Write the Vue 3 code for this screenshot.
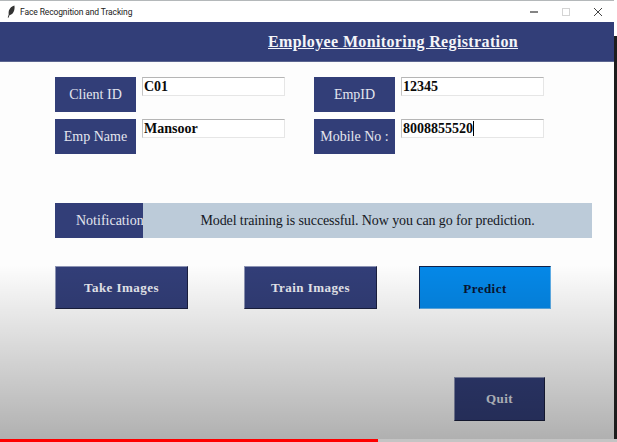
<script setup>
const fields = [
  { label: 'Client ID', value: 'C01' },
  { label: 'EmpID', value: '12345' },
  { label: 'Emp Name', value: 'Mansoor' },
  { label: 'Mobile No :', value: '8008855520', caret: true },
]
</script>

<template>
  <div class="screen">
    <div class="window">
      <div class="titlebar">
        <svg class="feather" width="8" height="13" viewBox="0 0 8 13">
          <path d="M7.400 .4C5 1 2.600 3 1.900 5.600 1.500 7.200 1.600 8.600 1.700 9.600L.7 12.600l.8.2 1-2.600C5 9.700 6.700 7.600 7.300 5 7.700 3.400 7.700 1.800 7.400 .4Z" fill="#333"/>
        </svg>
        <span class="title-text">Face Recognition and Tracking</span>
        <div class="controls">
          <svg width="10" height="10" viewBox="0 0 10 10"><path d="M1 5h8" stroke="#333" stroke-width="1.2"/></svg>
          <svg width="10" height="10" viewBox="0 0 10 10"><rect x="1.500" y="1.500" width="7" height="7" fill="none" stroke="#d4d4d4"/></svg>
          <svg width="10" height="10" viewBox="0 0 10 10"><path d="M1 1l8 8M9 1l-8 8" stroke="#444" stroke-width="1"/></svg>
        </div>
      </div>

      <header class="banner"><h1>Employee Monitoring Registration</h1></header>

      <main class="content">
        <section class="form">
          <div v-for="f in fields" :key="f.label" class="field">
            <div class="label">{{ f.label }}</div>
            <div class="entry"><span :class="{ caret: f.caret }">{{ f.value }}</span></div>
          </div>
        </section>

        <section class="notice">
          <div class="notice-label">Notification</div>
          <div class="notice-msg">Model training is successful. Now you can go for prediction.</div>
        </section>

        <section class="actions">
          <button class="btn take">Take Images</button>
          <button class="btn train">Train Images</button>
          <button class="btn predict">Predict</button>
        </section>

        <div class="quit-row"><button class="btn quit">Quit</button></div>
      </main>
    </div>
    <div class="shade"></div>
    <div class="edge"></div>
    <div class="progress"><div class="played"></div></div>
  </div>
</template>

<style>
html, body { margin: 0; background: #fff; }
</style>

<style scoped>
.screen {
  position: relative;
  width: 617px;
  height: 442px;
  overflow: hidden;
  background: #fff;
  font-family: "Liberation Serif", "Times New Roman", serif;
}
.window {
  width: 614px;
  height: 442px;
  background: #fdfdfd;
  box-sizing: border-box;
  border-top: 1px solid #b4b8ba;
}
.titlebar {
  height: 21px;
  display: flex;
  align-items: center;
  background: #fff;
  padding-left: 7px;
  box-sizing: border-box;
}
.feather { margin-right: 5px; }
.title-text {
  font-family: Roboto, "Liberation Sans", sans-serif;
  font-size: 8.5px;
  letter-spacing: -.12px;
  color: #222;
}
.controls {
  margin-left: auto;
  display: flex;
  gap: 22px;
  padding-right: 11px;
  align-items: center;
}
.banner {
  height: 40px;
  background: #323e78;
  display: flex;
  align-items: center;
  padding-left: 268px;
  box-sizing: border-box;
  border-bottom: 1px solid #5b6590;
}
.banner h1 {
  margin: 0;
  font-size: 16px;
  font-weight: 700;
  color: #f4f5f8;
  text-decoration: underline;
  letter-spacing: .37px;
}
.content { padding: 15px 0 0 55px; }
.form {
  display: grid;
  grid-template-columns: 230px 230px;
  column-gap: 29px;
  row-gap: 7px;
}
.field { display: flex; gap: 6px; align-items: flex-start; }
.label {
  width: 81px;
  height: 35px;
  background: #323e78;
  color: #e4e6ef;
  font-size: 14px;
  display: flex;
  align-items: center;
  justify-content: center;
}
.entry {
  width: 143px;
  height: 19px;
  box-sizing: border-box;
  background: #fff;
  border: 1px solid #e6e6e6;
  border-top-color: #b5b5b5;
  border-left-color: #c4c4c4;
  padding-left: 1px;
  font-size: 14px;
  font-weight: 700;
  line-height: 18px;
  color: #0a0a0a;
}
.caret { border-right: 1px solid #000; }
.notice {
  display: flex;
  height: 35px;
  width: 537px;
  margin-top: 49px;
  font-size: 14px;
}
.notice-label {
  width: 88px;
  flex: none;
  background: #323e78;
  color: #e4e6ef;
  padding-left: 21px;
  box-sizing: border-box;
  line-height: 35px;
  white-space: nowrap;
}
.notice-msg {
  flex: 1;
  background: #bccbd9;
  color: #15181f;
  text-align: center;
  line-height: 35px;
  letter-spacing: -.1px;
}
.actions {
  display: flex;
  margin-top: 28px;
}
.btn {
  height: 43px;
  padding: 0;
  font-family: inherit;
  font-size: 13px;
  font-weight: 700;
  letter-spacing: .45px;
  color: #e8e9ef;
  background: #323e78;
  border: 1px solid;
  border-color: #8d94b4 #1a1f3e #1a1f3e #8d94b4;
  box-sizing: border-box;
}
.take { width: 133px; }
.train { width: 133px; margin-left: 56px; }
.predict {
  width: 132px;
  margin-left: 42px;
  padding-top: 2px;
  background: #0588e8;
  color: #0a1430;
  border-color: #10224a #5eaee8 #5eaee8 #10224a;
}
.quit-row { margin-top: 68px; padding-left: 399px; }
.quit {
  width: 91px;
  height: 44px;
  color: #dfe1ea;
}
.shade {
  position: absolute;
  left: 0;
  right: 0;
  top: 265px;
  bottom: 0;
  pointer-events: none;
  background: linear-gradient(to bottom, rgba(0,0,0,0), rgba(0,0,0,.31));
}
.edge {
  position: absolute;
  right: 0;
  top: 36px;
  bottom: 0;
  width: 3px;
  background: #1d1d1d;
}
.progress {
  position: absolute;
  left: 0;
  right: 0;
  bottom: 0;
  height: 3px;
  background: #c4c4c4;
}
.played { width: 378px; height: 100%; background: #f00; }
</style>
